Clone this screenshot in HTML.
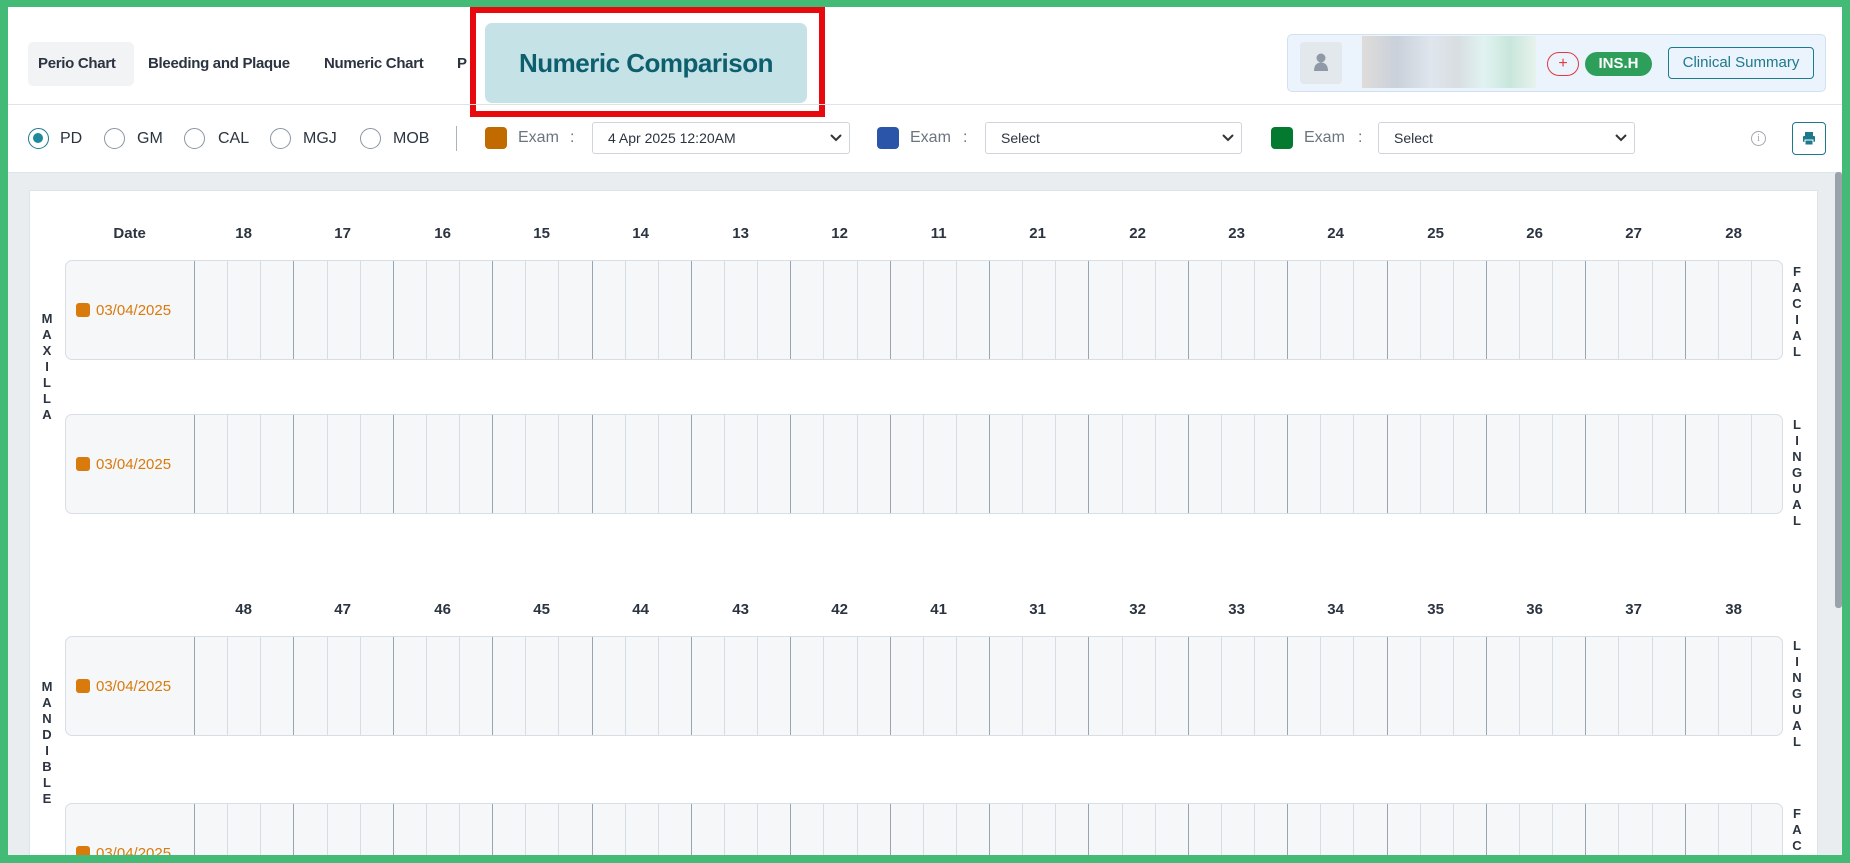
<!DOCTYPE html>
<html><head><meta charset="utf-8"><style>
*{box-sizing:border-box;margin:0;padding:0}
html,body{width:1850px;height:863px;overflow:hidden}
body{font-family:"Liberation Sans",sans-serif;color:#2b3440}
#root{position:relative;width:1850px;height:863px;overflow:hidden;background:#43bb77}
.abs{position:absolute}
#page{position:absolute;left:8px;top:7px;width:1834px;height:848px;background:#fff;overflow:hidden}
.tab{position:absolute;top:35px;height:44px;line-height:44px;font-size:15px;font-weight:bold;color:#2b3440;letter-spacing:-0.3px}
.radio{position:absolute;top:121px;width:21px;height:21px;border:1.5px solid #8a96a3;border-radius:50%;background:#fff}
.rl{position:absolute;top:121px;line-height:21px;font-size:16px;color:#2b3440}
.sq{position:absolute;top:120px;width:22px;height:22px;border-radius:4px}
.ex{position:absolute;top:120px;line-height:22px;font-size:16px;color:#6b7580}
.sel{position:absolute;top:115px;height:32px;border:1px solid #cfd5db;border-radius:3px;background:#fff;font-size:14px;line-height:30px;padding-left:15px;color:#2b3440}
.sel svg{position:absolute;right:6px;top:10px}
.num{position:absolute;font-size:15px;font-weight:bold;color:#2b3440;text-align:center;width:99.3px}
.row{position:absolute;left:57px;width:1718px;height:100px;background:#f5f7f9;border:1.5px solid #d8dee6;border-radius:7px;overflow:hidden}
.row .d{position:absolute;left:10px;top:0;height:100%;display:flex;align-items:center;font-size:15px;color:#d97a0c}
.row .d i{display:inline-block;width:14px;height:14px;background:#d97a0c;border-radius:3px;margin-right:6px}
.cols{position:absolute;left:128px;top:0;height:100%;width:1590px;display:flex}
.col{flex:1;border-left:1.5px solid #97a5b2;display:flex}
.col span{flex:1;border-left:1px solid #d5dce4}
.col span:first-child{border-left:none}
.vl{position:absolute;width:20px;text-align:center;font-size:13px;font-weight:bold;line-height:16px;color:#2b3440}
</style></head><body><div id="root">
<div id="page">
  <div class="abs" style="left:20px;top:35px;width:106px;height:44px;background:#f1f3f5;border-radius:5px"></div>
  <div class="tab" style="left:30px">Perio Chart</div>
  <div class="tab" style="left:140px">Bleeding and Plaque</div>
  <div class="tab" style="left:316px">Numeric Chart</div>
  <div class="tab" style="left:449px">P</div>
  <div class="abs" style="left:462px;top:0;width:355px;height:110px;border:6px solid #e8090f;background:#fff"></div>
  <div class="abs" style="left:477px;top:16px;width:322px;height:80px;background:#c5e2e7;border-radius:7px;line-height:80px;text-align:center;font-size:26px;font-weight:bold;color:#0e5f6e;letter-spacing:-0.5px">Numeric Comparison</div>

  <div class="abs" style="left:1279px;top:27px;width:539px;height:58px;background:#ebf3fc;border:1px solid #d2e1f1;border-radius:5px"></div>
  <div class="abs" style="left:1292px;top:35px;width:42px;height:42px;background:#e3e8ed;border-radius:4px">
    <svg width="42" height="42" viewBox="0 0 42 42"><circle cx="21" cy="16" r="4.5" fill="#8f9aa6"/><path d="M14 29c0-6 3-8.5 7-8.5s7 2.5 7 8.5z" fill="#8f9aa6"/></svg>
  </div>
  <div class="abs" style="left:1354px;top:29px;width:174px;height:52px;background:linear-gradient(90deg,#dcd8d4 0,#c4cbd4 20%,#dde3ea 40%,#d4dadc 55%,#dff2ef 70%,#c3e4d6 85%,#e6f2e9 100%);opacity:.85"></div>
  <div class="abs" style="left:1539px;top:45px;width:32px;height:24px;border:1px solid #e0393f;border-radius:12px;color:#e0393f;text-align:center;line-height:22px;font-size:16px">+</div>
  <div class="abs" style="left:1577px;top:45px;width:67px;height:24px;background:#2e9e5b;border-radius:12px;color:#fff;text-align:center;line-height:24px;font-size:15px;font-weight:bold">INS.H</div>
  <div class="abs" style="left:1660px;top:40px;width:146px;height:32px;border:1px solid #1c7a8c;border-radius:4px;color:#1c7a8c;text-align:center;line-height:30px;font-size:15px">Clinical Summary</div>

  <div class="abs" style="left:0;top:97px;width:1834px;height:1px;background:#dde3e9"></div>

  <div class="radio" style="left:20px;border-color:#1c7a8c"><div style="position:absolute;left:4px;top:4px;width:10px;height:10px;border-radius:50%;background:#1c8a9c"></div></div>
  <div class="rl" style="left:52px">PD</div>
  <div class="radio" style="left:96px"></div><div class="rl" style="left:129px">GM</div>
  <div class="radio" style="left:176px"></div><div class="rl" style="left:210px">CAL</div>
  <div class="radio" style="left:262px"></div><div class="rl" style="left:295px">MGJ</div>
  <div class="radio" style="left:352px"></div><div class="rl" style="left:385px">MOB</div>
  <div class="abs" style="left:448px;top:119px;width:1px;height:25px;background:#aab3bc"></div>

  <div class="sq" style="left:477px;background:#c06a00"></div><div class="ex" style="left:510px">Exam</div><div class="ex" style="left:562px">:</div>
  <div class="sel" style="left:584px;width:258px">4 Apr 2025 12:20AM<svg width="14" height="10" viewBox="0 0 14 10"><path d="M2 2l5 5 5-5" stroke="#333" stroke-width="2" fill="none"/></svg></div>
  <div class="sq" style="left:869px;background:#2b55a8"></div><div class="ex" style="left:902px">Exam</div><div class="ex" style="left:955px">:</div>
  <div class="sel" style="left:977px;width:257px">Select<svg width="14" height="10" viewBox="0 0 14 10"><path d="M2 2l5 5 5-5" stroke="#333" stroke-width="2" fill="none"/></svg></div>
  <div class="sq" style="left:1263px;background:#047a31"></div><div class="ex" style="left:1296px">Exam</div><div class="ex" style="left:1350px">:</div>
  <div class="sel" style="left:1370px;width:257px">Select<svg width="14" height="10" viewBox="0 0 14 10"><path d="M2 2l5 5 5-5" stroke="#333" stroke-width="2" fill="none"/></svg></div>
  <div class="abs" style="left:1743px;top:124px;width:15px;height:15px;border:1.3px solid #a0a8b0;border-radius:50%;color:#a0a8b0;font-size:10px;text-align:center;line-height:13px;font-family:'Liberation Serif',serif">i</div>
  <div class="abs" style="left:1784px;top:115px;width:34px;height:33px;border:1px solid #1c7a8c;border-radius:4px">
    <svg width="32" height="31" viewBox="0 0 32 31"><rect x="12" y="9" width="8" height="4" fill="#1c7a8c"/><rect x="10" y="13" width="12" height="6" rx="1" fill="#1c7a8c"/><rect x="12" y="17" width="8" height="5" fill="#1c7a8c" stroke="#fff" stroke-width="1"/></svg>
  </div>

  <div class="abs" style="left:0;top:165px;width:1834px;height:700px;background:#e9edf0;border-top:1px solid #dde3e9"></div>
  <div class="abs" style="left:1827px;top:165px;width:7px;height:436px;background:#9aa3ab;border-radius:3px"></div>
  <div class="abs" style="left:21px;top:183px;width:1789px;height:700px;background:#fff;border:1px solid #dde3e9"></div>
</div>

<div class="num" style="left:80px;top:225px">Date</div>
<div class="num" style="left:194px;top:225px">18</div><div class="num" style="left:293px;top:225px">17</div><div class="num" style="left:393px;top:225px">16</div><div class="num" style="left:492px;top:225px">15</div><div class="num" style="left:591px;top:225px">14</div><div class="num" style="left:691px;top:225px">13</div><div class="num" style="left:790px;top:225px">12</div><div class="num" style="left:889px;top:225px">11</div><div class="num" style="left:988px;top:225px">21</div><div class="num" style="left:1088px;top:225px">22</div><div class="num" style="left:1187px;top:225px">23</div><div class="num" style="left:1286px;top:225px">24</div><div class="num" style="left:1386px;top:225px">25</div><div class="num" style="left:1485px;top:225px">26</div><div class="num" style="left:1584px;top:225px">27</div><div class="num" style="left:1684px;top:225px">28</div>
<div class="num" style="left:194px;top:601px">48</div><div class="num" style="left:293px;top:601px">47</div><div class="num" style="left:393px;top:601px">46</div><div class="num" style="left:492px;top:601px">45</div><div class="num" style="left:591px;top:601px">44</div><div class="num" style="left:691px;top:601px">43</div><div class="num" style="left:790px;top:601px">42</div><div class="num" style="left:889px;top:601px">41</div><div class="num" style="left:988px;top:601px">31</div><div class="num" style="left:1088px;top:601px">32</div><div class="num" style="left:1187px;top:601px">33</div><div class="num" style="left:1286px;top:601px">34</div><div class="num" style="left:1386px;top:601px">35</div><div class="num" style="left:1485px;top:601px">36</div><div class="num" style="left:1584px;top:601px">37</div><div class="num" style="left:1684px;top:601px">38</div>

<div class="row" style="top:260px;left:65px"><div class="d"><i></i>03/04/2025</div><div class="cols"><div class="col"><span></span><span></span><span></span></div><div class="col"><span></span><span></span><span></span></div><div class="col"><span></span><span></span><span></span></div><div class="col"><span></span><span></span><span></span></div><div class="col"><span></span><span></span><span></span></div><div class="col"><span></span><span></span><span></span></div><div class="col"><span></span><span></span><span></span></div><div class="col"><span></span><span></span><span></span></div><div class="col"><span></span><span></span><span></span></div><div class="col"><span></span><span></span><span></span></div><div class="col"><span></span><span></span><span></span></div><div class="col"><span></span><span></span><span></span></div><div class="col"><span></span><span></span><span></span></div><div class="col"><span></span><span></span><span></span></div><div class="col"><span></span><span></span><span></span></div><div class="col"><span></span><span></span><span></span></div></div></div>
<div class="row" style="top:414px;left:65px"><div class="d"><i></i>03/04/2025</div><div class="cols"><div class="col"><span></span><span></span><span></span></div><div class="col"><span></span><span></span><span></span></div><div class="col"><span></span><span></span><span></span></div><div class="col"><span></span><span></span><span></span></div><div class="col"><span></span><span></span><span></span></div><div class="col"><span></span><span></span><span></span></div><div class="col"><span></span><span></span><span></span></div><div class="col"><span></span><span></span><span></span></div><div class="col"><span></span><span></span><span></span></div><div class="col"><span></span><span></span><span></span></div><div class="col"><span></span><span></span><span></span></div><div class="col"><span></span><span></span><span></span></div><div class="col"><span></span><span></span><span></span></div><div class="col"><span></span><span></span><span></span></div><div class="col"><span></span><span></span><span></span></div><div class="col"><span></span><span></span><span></span></div></div></div>
<div class="row" style="top:636px;left:65px"><div class="d"><i></i>03/04/2025</div><div class="cols"><div class="col"><span></span><span></span><span></span></div><div class="col"><span></span><span></span><span></span></div><div class="col"><span></span><span></span><span></span></div><div class="col"><span></span><span></span><span></span></div><div class="col"><span></span><span></span><span></span></div><div class="col"><span></span><span></span><span></span></div><div class="col"><span></span><span></span><span></span></div><div class="col"><span></span><span></span><span></span></div><div class="col"><span></span><span></span><span></span></div><div class="col"><span></span><span></span><span></span></div><div class="col"><span></span><span></span><span></span></div><div class="col"><span></span><span></span><span></span></div><div class="col"><span></span><span></span><span></span></div><div class="col"><span></span><span></span><span></span></div><div class="col"><span></span><span></span><span></span></div><div class="col"><span></span><span></span><span></span></div></div></div>
<div class="row" style="top:803px;left:65px"><div class="d"><i></i>03/04/2025</div><div class="cols"><div class="col"><span></span><span></span><span></span></div><div class="col"><span></span><span></span><span></span></div><div class="col"><span></span><span></span><span></span></div><div class="col"><span></span><span></span><span></span></div><div class="col"><span></span><span></span><span></span></div><div class="col"><span></span><span></span><span></span></div><div class="col"><span></span><span></span><span></span></div><div class="col"><span></span><span></span><span></span></div><div class="col"><span></span><span></span><span></span></div><div class="col"><span></span><span></span><span></span></div><div class="col"><span></span><span></span><span></span></div><div class="col"><span></span><span></span><span></span></div><div class="col"><span></span><span></span><span></span></div><div class="col"><span></span><span></span><span></span></div><div class="col"><span></span><span></span><span></span></div><div class="col"><span></span><span></span><span></span></div></div></div>

<div class="vl" style="left:37px;top:311px">M<br>A<br>X<br>I<br>L<br>L<br>A</div>
<div class="vl" style="left:37px;top:679px">M<br>A<br>N<br>D<br>I<br>B<br>L<br>E</div>
<div class="vl" style="left:1787px;top:264px">F<br>A<br>C<br>I<br>A<br>L</div>
<div class="vl" style="left:1787px;top:417px">L<br>I<br>N<br>G<br>U<br>A<br>L</div>
<div class="vl" style="left:1787px;top:638px">L<br>I<br>N<br>G<br>U<br>A<br>L</div>
<div class="vl" style="left:1787px;top:806px">F<br>A<br>C<br>I<br>A<br>L</div>

<div class="abs" style="left:0;top:855px;width:1850px;height:8px;background:#43bb77"></div>
</div></body></html>
